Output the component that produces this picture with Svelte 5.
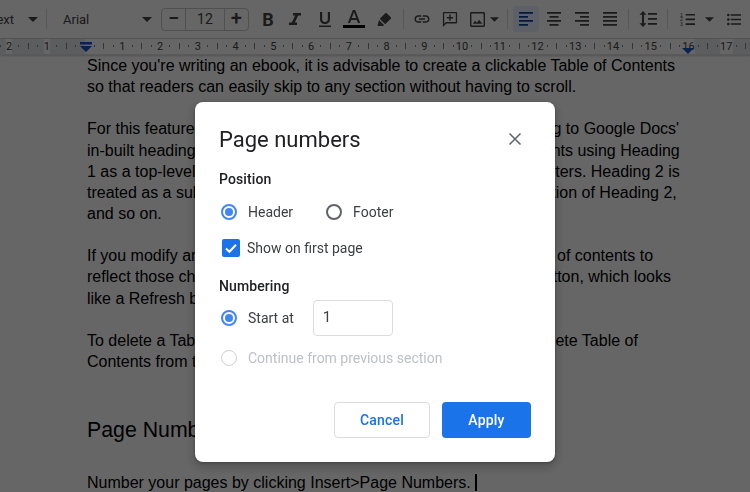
<script>
  const doc1 = [
    "Since you're writing an ebook, it is advisable to create a clickable Table of Contents",
    "so that readers can easily skip to any section without having to scroll."
  ];
  const doc2 = [
    "For this feature, you'll first need to format your document according to Google Docs'",
    "in-built heading styles. Organize all of your new ebook's top contents using Heading",
    "1 as a top-level heading for the titles of all your ebook's main chapters. Heading 2 is",
    "treated as a subheading of Heading 1, and Heading 3 is a subsection of Heading 2,",
    "and so on."
  ];
  const doc3 = [
    "If you modify any of your headings, you'll need to update the table of contents to",
    "reflect those changes. To do this, simply click the small Update button, which looks",
    "like a Refresh button that sits next to your table of contents."
  ];
  const doc4 = [
    "To delete a Table of Contents, right click on it and then choose Delete Table of",
    "Contents from the menu that appears on your screen."
  ];
  const paras = [doc1, doc2, doc3, doc4];

  const unit = 37.75;
  const zero = 84.5;
  const nums = [];
  for (let i = -2; i <= 17; i++) if (i !== 0) nums.push({ n: Math.abs(i), x: zero + i * unit });
  const ticks = [];
  for (let i = -3; i <= 18; i++) {
    ticks.push({ x: zero + i * unit + unit / 2, tall: true });
    ticks.push({ x: zero + i * unit + unit / 4, tall: false });
    ticks.push({ x: zero + i * unit + (3 * unit) / 4, tall: false });
  }
</script>

<div class="page">
  <header class="toolbar">
    <div class="style-box"><span class="clip">Normal text</span><svg class="caret" width="10" height="5" viewBox="0 0 10 5"><path d="M0 0h10L5 5z" /></svg></div>
    <i class="sep first"></i>
    <div class="font-box"><span>Arial</span><svg class="caret" width="10" height="5" viewBox="0 0 10 5"><path d="M0 0h10L5 5z" /></svg></div>
    <div class="size-box">
      <span class="sb">−</span><span class="sv">12</span><span class="sb plus">+</span>
    </div>
    <div class="tool fmt"><b class="ic-b">B</b></div>
    <div class="tool fmt2"><svg width="18" height="18" viewBox="0 0 18 18"><path d="M7 3v2.500h2.200L5.800 12.500H3V15h8v-2.500H8.800l3.400-7H15V3z" /></svg></div>
    <div class="tool fmt3"><svg width="18" height="18" viewBox="0 0 18 18"><path d="M3 15.500h12v1.500H3zM9 14c-2.900 0-5-2-5-4.800V2h2.200v7.200C6.200 11 7.300 12 9 12s2.800-1 2.800-2.800V2H14v7.200C14 12 11.900 14 9 14z" /></svg></div>
    <div class="tool color"><svg width="22" height="24" viewBox="0 0 22 24"><path d="M9.800 2h2.400l5 13h-2.300l-1.100-3H8.100L7 15H4.800zM8.800 10h4.400L11 4.200z" /><rect x="0" y="17" width="22" height="3" fill="#000" /></svg></div>
    <div class="tool hl"><svg width="18" height="18" viewBox="0 0 18 18"><path d="M10.700 3.200l4.100 4.100c.4.400.4 1 0 1.400l-5.600 5.600-5.500-5.500 5.600-5.600c.4-.4 1-.4 1.400 0zM3 10l5 5-1 1H1.500z" /></svg></div>
    <i class="sep s2"></i>
    <div class="tool link"><svg width="22" height="18" viewBox="0 0 24 24"><path d="M3.900 12c0-1.700 1.400-3.100 3.100-3.100h4V7H7c-2.800 0-5 2.200-5 5s2.200 5 5 5h4v-1.900H7c-1.700 0-3.100-1.400-3.100-3.100zM8 13h8v-2H8zm9-6h-4v1.900h4c1.700 0 3.100 1.400 3.100 3.100s-1.400 3.100-3.100 3.100h-4V17h4c2.800 0 5-2.200 5-5s-2.200-5-5-5z" /></svg></div>
    <div class="tool comment"><svg width="16" height="18" viewBox="0 0 18 20"><path d="M2 2h14c.6 0 1 .4 1 1v11c0 .6-.4 1-1 1H5l-4 4V3c0-.6.4-1 1-1zm.5 1.500v11.800l1.900-1.800h11.100v-10zM8.200 5h1.600v2.700h2.700v1.600H9.800V12H8.200V9.300H5.500V7.700h2.700z" /></svg></div>
    <div class="tool image"><svg width="15" height="15" viewBox="0 0 16 16"><path d="M1.500 0h13c.8 0 1.500.7 1.500 1.500v13c0 .8-.7 1.500-1.500 1.500h-13C.7 16 0 15.300 0 14.500v-13C0 .7.700 0 1.500 0zm0 1.500v13h13v-13zM3 12.500l2.500-3.200 1.800 2.200 2.500-3.300 3.200 4.300z" /></svg><svg class="caret" width="9" height="5" viewBox="0 0 10 5"><path d="M0 0h10L5 5z" /></svg></div>
    <i class="sep s3"></i>
    <div class="tool al active"><svg width="16" height="16" viewBox="0 0 16 16"><path class="bl" d="M1 1h14v1.800H1zM1 5h9v1.800H1zM1 9h14v1.800H1zM1 13h9v1.800H1z" /></svg></div>
    <div class="tool al"><svg width="16" height="16" viewBox="0 0 16 16"><path d="M1 1h14v1.800H1zM3.500 5h9v1.800h-9zM1 9h14v1.800H1zM3.500 13h9v1.800h-9z" /></svg></div>
    <div class="tool al"><svg width="16" height="16" viewBox="0 0 16 16"><path d="M1 1h14v1.800H1zM6 5h9v1.800H6zM1 9h14v1.800H1zM6 13h9v1.800H6z" /></svg></div>
    <div class="tool al"><svg width="16" height="16" viewBox="0 0 16 16"><path d="M1 1h14v1.800H1zM1 5h14v1.800H1zM1 9h14v1.800H1zM1 13h14v1.800H1z" /></svg></div>
    <i class="sep s4"></i>
    <div class="tool ls"><svg width="18" height="16" viewBox="0 0 18 16"><path d="M4 0l3.500 3.800H5v8.400h2.500L4 16 .5 12.200H3V3.800H.5zM9 2h9v1.800H9zM9 7h9v1.800H9zM9 12h9v1.800H9z" /></svg></div>
    <i class="sep s5"></i>
    <div class="tool nl"><svg width="15" height="15" viewBox="0 0 16 15"><path d="M6 1.500h10v1.800H6zM6 6.500h10v1.800H6zM6 11.500h10v1.800H6z" /><text x="0" y="4.500" class="tiny">1</text><text x="0" y="9.500" class="tiny">2</text><text x="0" y="14.500" class="tiny">3</text></svg><svg class="caret" width="9" height="5" viewBox="0 0 10 5"><path d="M0 0h10L5 5z" /></svg></div>
    <div class="tool bu"><svg width="14" height="13" viewBox="0 0 15 13"><path d="M4 .8h11v1.800H4zM4 5.600h11v1.800H4zM4 10.400h11v1.800H4z" /><circle cx="1.400" cy="1.700" r="1.400" /><circle cx="1.400" cy="6.500" r="1.400" /><circle cx="1.400" cy="11.300" r="1.400" /></svg></div>
  </header>

  <div class="ruler">
    <div class="rm left"></div>
    <div class="rm right"></div>
    {#each ticks as t}
      <i class="tick" class:tall={t.tall} style="left:{t.x}px"></i>
    {/each}
    {#each nums as r}
      <span class="num" style="left:{r.x}px">{r.n}</span>
    {/each}
    <svg class="indent" width="12" height="11" viewBox="0 0 12 11"><path d="M0 0h12v2.500H0zM0 4h12L6 10z" /></svg>
    <svg class="rindent" width="12" height="6" viewBox="0 0 12 6"><path d="M0 0h12L6 6z" /></svg>
  </div>

  <main class="doc">
    {#each paras as p}
      <p>{#each p as l}<span class="ln">{l}</span>{/each}</p>
    {/each}
    <h2>Page Numbers</h2>
    <p class="last"><span class="ln">Number your pages by clicking Insert&gt;Page Numbers. <i class="cursor"></i></span></p>
  </main>
</div>

<div class="scrim"></div>

<div class="dialog" role="dialog" aria-label="Page numbers">
  <div class="head">
    <h1>Page numbers</h1>
    <svg class="close" width="14" height="14" viewBox="0 0 14 14"><path d="M1.500 1.500l11 11M12.500 1.500l-11 11" /></svg>
  </div>
  <h3>Position</h3>
  <div class="row pos">
    <span class="radio on"></span><span class="lbl">Header</span>
    <span class="radio off second"></span><span class="lbl">Footer</span>
  </div>
  <div class="row chk">
    <span class="check"><svg width="18" height="18" viewBox="0 0 18 18"><path d="M4 9.500l3.400 3.300L14 5.800" /></svg></span>
    <span class="lbl">Show on first page</span>
  </div>
  <h3 class="num-h">Numbering</h3>
  <div class="row start">
    <span class="radio on"></span><span class="lbl">Start at</span>
    <span class="input">1</span>
  </div>
  <div class="row cont">
    <span class="radio dis"></span><span class="lbl dim">Continue from previous section</span>
  </div>
  <div class="actions">
    <span class="btn cancel">Cancel</span>
    <span class="btn apply">Apply</span>
  </div>
</div>

<style>
  :global(body) { margin: 0; background: #fff; overflow: hidden; }
  .page { width: 750px; height: 492px; overflow: hidden; background: #fff; font-family: "Liberation Sans", Arial, sans-serif; color: #000; }

  .toolbar { height: 38px; display: flex; align-items: center; background: #fff; color: #444746; white-space: nowrap; }
  .toolbar svg { fill: #444; flex: none; }
  .toolbar .tool { display: flex; align-items: center; justify-content: center; flex: none; height: 26px; }
  .sep { width: 1px; height: 20px; background: #dadce0; flex: none; display: block; }
  .style-box { width: 46px; flex: none; display: flex; align-items: center; justify-content: space-between; padding-right: 8px; box-sizing: border-box; font: 13px Roboto, sans-serif; color: #444; overflow: hidden; }
  .clip { direction: rtl; width: 14px; overflow: hidden; flex: none; white-space: nowrap; }
  .style-box .caret { flex: none; }
  .font-box { width: 114px; flex: none; display: flex; align-items: center; justify-content: space-between; font: 13px Roboto, sans-serif; color: #444; padding: 0 9px 0 16px; box-sizing: border-box; }
  .size-box { width: 88px; height: 23px; flex: none; display: flex; border: 1px solid #c7c7c7; border-radius: 4px; box-sizing: border-box; font: 14px Roboto, sans-serif; color: #444; line-height: 21px; text-align: center; }
  .sb { width: 24px; font-size: 20px; font-weight: 500; line-height: 19px; }
  .sv { width: 40px; border-left: 1px solid #c7c7c7; border-right: 1px solid #c7c7c7; box-sizing: border-box; }
  .fmt { width: 28px; margin-left: 5px; }
  .ic-b { font: 700 18px Roboto, sans-serif; color: #444; }
  .fmt2 { width: 26px; }
  .fmt3 { width: 31px; margin-left: 1px; }
  .color { width: 28px; padding-top: 2px; }
  .hl { width: 28px; margin-left: 3px; }
  .s2 { margin-left: 4px; }
  .link { width: 36px; }
  .comment { width: 20px; }
  .toolbar .image { width: 47px; gap: 5px; padding-left: 10px; box-sizing: border-box; justify-content: flex-start; }
  .al { width: 26px; margin-right: 2px; }
  .active { background: #e8f0fe; border-radius: 4px; margin-left: 5px; }
  .bl { fill: #0842a0; }
  .s4 { margin-left: 3px; }
  .ls { width: 38px; }
  .toolbar .nl { width: 52px; gap: 10px; padding-left: 12px; box-sizing: border-box; justify-content: flex-start; }
  .tiny { font: 5.500px "Liberation Sans", sans-serif; fill: #444; }
  .bu { width: 23px; margin-left: 2px; }

  .ruler { position: relative; height: 15px; background: #fff; border-top: 1px solid #cfcfcf; border-bottom: 1px solid #e0e0e0; overflow: hidden; box-shadow: 0 1px 2px rgba(0,0,0,.2); }
  .rm { position: absolute; top: 0; bottom: 0; background: #e6e8ea; }
  .rm.left { left: 0; width: 85px; }
  .rm.right { left: 687px; right: 0; }
  .tick { position: absolute; top: 6px; width: 1px; height: 2px; background: #80868b; }
  .tick.tall { top: 4px; height: 6px; }
  .num { position: absolute; top: 0; transform: translateX(-50%); font: 11px/15px Roboto, sans-serif; color: #444; background: inherit; }
  .indent { position: absolute; left: 80px; top: 3px; fill: #1a56c4; }
  .rindent { position: absolute; left: 682px; top: 9px; fill: #1a56c4; }

  .doc { padding: 0 0 0 87px; font-size: 16px; line-height: 21.140px; white-space: nowrap; color: #000; }
  .doc p { margin: 0 0 21.140px; }
  .ln { display: block; }
  .doc h2 { margin: 45px 0 0; font: 400 21.300px/26px "Liberation Sans", sans-serif; }
  .doc .last { margin-top: 29px; }
  .cursor { display: inline-block; width: 2px; height: 17px; background: #000; vertical-align: -3px; }

  .scrim { position: fixed; inset: 0; background: rgba(0,0,0,.6); }

  .dialog { position: fixed; left: 195px; top: 102px; width: 360px; height: 360px; box-sizing: border-box; padding: 0 24px; background: #fff; border-radius: 8px; box-shadow: 0 4px 8px 3px rgba(0,0,0,.15), 0 1px 3px rgba(0,0,0,.3); font: 14px Roboto, sans-serif; color: #3c4043; display: flex; flex-direction: column; }
  .head { height: 67px; display: flex; align-items: flex-start; justify-content: space-between; padding-top: 23px; box-sizing: border-box; }
  h1 { margin: 0; font: 400 22px/30px Roboto, sans-serif; color: #202124; }
  .close { fill: none; stroke: #5f6368; stroke-width: 1.500; margin: 7px 9px 0 0; }
  h3 { margin: 0; font: 500 14px/20px Roboto, sans-serif; color: #202124; letter-spacing: .1px; }
  .row { display: flex; align-items: center; }
  .pos { margin-top: 11px; height: 24px; }
  .radio { width: 16px; height: 16px; box-sizing: border-box; border-radius: 50%; border: 2px solid #5f6368; flex: none; margin: 0 11px 0 2px; position: relative; }
  .radio.on { border-color: #4285f4; }
  .radio.on::after { content: ""; position: absolute; left: 2px; top: 2px; width: 8px; height: 8px; border-radius: 50%; background: #4285f4; }
  .radio.dis { border: 1.500px solid #d0d0d0; }
  .second { margin-left: 33px; }
  .chk { margin-top: 13px; height: 22px; }
  .check { width: 18px; height: 18px; border-radius: 2px; background: #1a73e8; flex: none; margin: 0 7px 0 3px; display: block; }
  .check svg { display: block; fill: none; stroke: #fff; stroke-width: 2; }
  .num-h { margin-top: 17px; }
  .start { margin-top: 4px; height: 36px; }
  .input { width: 80px; height: 36px; box-sizing: border-box; margin-left: 19px; border: 1px solid #dadce0; border-radius: 4px; padding-left: 9px; line-height: 32px; font-size: 15px; color: #3c4043; }
  .cont { margin-top: 10px; height: 24px; }
  .dim { color: #bdc1c6; }
  .actions { margin-top: 32px; display: flex; justify-content: flex-end; gap: 12px; }
  .btn { height: 36px; box-sizing: border-box; border-radius: 4px; display: flex; align-items: center; justify-content: center; font: 500 14px Roboto, sans-serif; letter-spacing: .2px; }
  .cancel { width: 96px; border: 1px solid #dadce0; color: #1a73e8; }
  .apply { width: 89px; background: #1a73e8; color: #fff; }
</style>
